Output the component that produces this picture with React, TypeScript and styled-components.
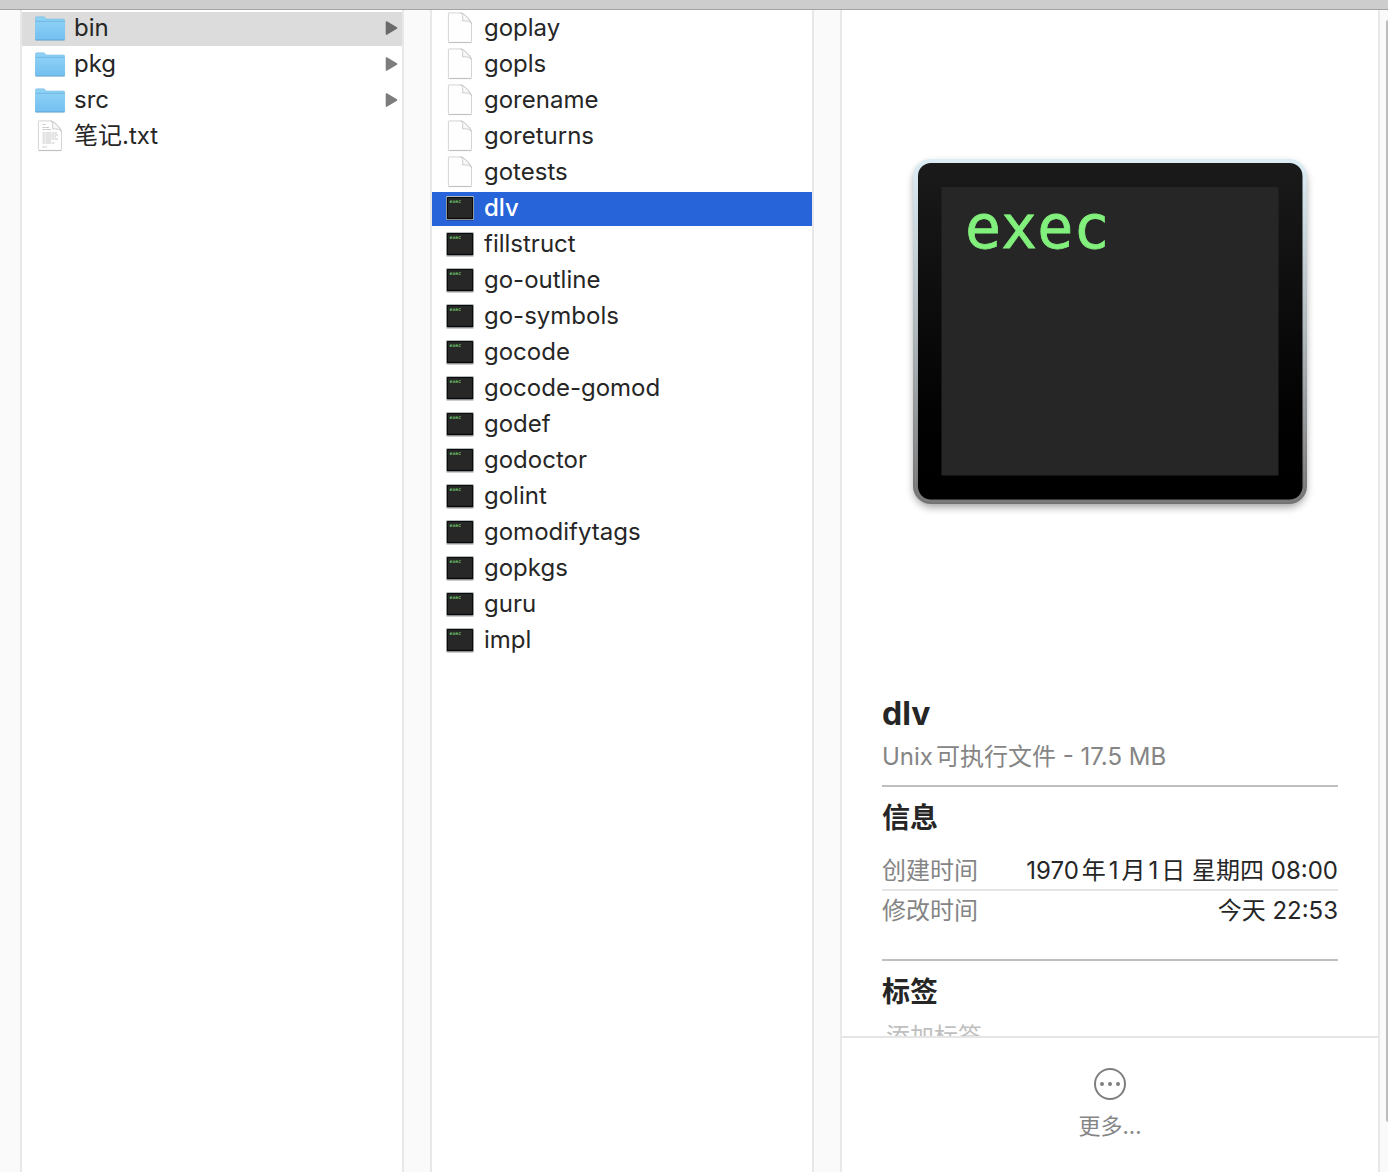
import React, { useState } from "react";
import styled, { createGlobalStyle } from "styled-components";

const GlobalStyle = createGlobalStyle`
  *, *::before, *::after { box-sizing: border-box; }
  body {
    margin: 0;
    background: #fff;
    color: #262626;
    font-family: Inter, "Noto Sans CJK SC", sans-serif;
    font-size: 24px;
    line-height: 32px;
    text-autospace: normal;
  }
  button, input { font: inherit; color: inherit; }
`;

const Window = styled.div`
  display: flex;
  flex-direction: column;
  height: 100vh;
  overflow: hidden;
`;

const Toolbar = styled.header`
  flex: none;
  height: 10px;
  background: #cdcdcd;
  border-bottom: 1px solid #a3a3a3;
`;

const Browser = styled.main`
  flex: 1;
  min-height: 0;
  display: flex;
`;

const Gutter = styled.div<{ $width: number }>`
  flex: none;
  width: ${(p) => p.$width}px;
  background: #fafafa;
`;

const Column = styled.nav`
  flex: none;
  width: 384px;
  padding-top: 2px;
  border: solid #e8e8e8;
  border-width: 0 2px;
`;

const List = styled.ul`
  display: flex;
  flex-direction: column;
  gap: 2px;
  margin: 0;
  padding: 0;
  list-style: none;
`;

const Row = styled.button<{ $tone: "plain" | "path" | "active" }>`
  display: flex;
  align-items: flex-start;
  gap: 8px;
  width: 100%;
  height: 34px;
  padding: 0 4px 0 12px;
  border: 0;
  text-align: left;
  background: ${(p) => ({ plain: "transparent", path: "#dcdcdc", active: "#2763d9" })[p.$tone]};
  color: ${(p) => (p.$tone === "active" ? "#fff" : "#262626")};
  font-weight: ${(p) => (p.$tone === "active" ? 500 : 400)};
`;

const Glyph = styled.svg`
  flex: none;
  display: block;
  width: 32px;
  height: 34px;
`;

const Name = styled.span`
  flex: 1;
  min-width: 0;
  white-space: nowrap;
  overflow: hidden;
  text-overflow: ellipsis;
`;

const Arrow = styled.svg`
  flex: none;
  width: 14px;
  height: 34px;
`;

const Preview = styled.section`
  flex: 1;
  min-width: 0;
  display: flex;
  flex-direction: column;
  border: solid #e8e8e8;
  border-width: 0 2px;
`;

const Details = styled.div`
  flex: 1;
  min-height: 0;
  overflow: hidden;
  padding: 0 40px;
`;

const Artwork = styled.div`
  display: flex;
  justify-content: center;
  padding: 140px 0 174px;
`;

const Art = styled.svg`
  flex: none;
  display: block;
  width: 420px;
  height: 370px;
`;

const Title = styled.h1`
  margin: 0;
  font-size: 32px;
  line-height: 40px;
  font-weight: 700;
`;

const Kind = styled.p`
  margin: 0;
  padding: 7px 0 12px;
  color: #858585;
`;

const Group = styled.section<{ $tail?: number }>`
  border-top: 2px solid #bfbfbf;
  padding: 11px 0 ${(p) => p.$tail ?? 0}px;
`;

const Heading = styled.h2`
  margin: 0;
  font-size: 28px;
  line-height: 40px;
  font-weight: 700;
`;

const Facts = styled.dl`
  margin: 11px 0 0;
`;

const Fact = styled.div`
  display: flex;
  justify-content: space-between;
  padding: 6px 0 2px;
  & + & {
    padding-top: 4px;
    border-top: 2px solid #e5e5e5;
  }
`;

const Term = styled.dt`
  color: #858585;
`;

const Value = styled.dd`
  margin: 0;
`;

const TagInput = styled.input`
  display: block;
  width: 100%;
  height: 40px;
  margin-top: 4px;
  padding: 0 4px;
  border: 0;
  outline: 0;
  background: transparent;
  &::placeholder { color: #bfbfbf; opacity: 1; }
`;

const Footer = styled.footer`
  flex: none;
  display: flex;
  justify-content: center;
  height: 136px;
  padding-top: 28px;
  border-top: 2px solid #e5e5e5;
`;

const MoreButton = styled.button`
  display: flex;
  flex-direction: column;
  align-items: center;
  align-self: flex-start;
  gap: 8px;
  padding: 0;
  border: 0;
  background: none;
  color: #858585;
  font-size: 22px;
`;

const MoreIcon = styled.svg`
  width: 36px;
  height: 36px;
`;

const ScrollTrack = styled.div`
  flex: none;
  width: 8px;
  display: flex;
  justify-content: flex-end;
  padding: 10px 0 50px;
  background: #fafafa;
`;

const ScrollThumb = styled.div`
  width: 2px;
  border-radius: 2px 0 0 2px;
  background: #bdbdbd;
`;

type Kinds = "folder" | "text" | "blank" | "exec";

function FolderIcon() {
  return (
    <Glyph viewBox="0 0 32 34" aria-hidden="true">
      <defs>
        <linearGradient id="folderFront" x1="0" y1="0" x2="0" y2="1">
          <stop offset="0" stopColor="#8dd0f6" />
          <stop offset="1" stopColor="#72bff0" />
        </linearGradient>
      </defs>
      <path d="M1.5 28V5.9Q1.5 4.8 2.7 4.8H9.4Q10.4 4.8 11 5.6L12 7H29.6Q30.6 7 30.6 8V28Z" fill="#8dd1f5" stroke="#6fb4dc" strokeWidth=".5" />
      <path d="M1.2 9.4H30.8V27.2Q30.8 28 30 28H2Q1.2 28 1.2 27.2Z" fill="url(#folderFront)" />
      <path d="M1.5 9.3H30.5" stroke="#67b1de" strokeWidth=".8" />
      <path d="M1.5 28H30.5" stroke="#5c9fca" strokeWidth=".8" />
    </Glyph>
  );
}

function PageIcon({ lines }: { lines?: boolean }) {
  return (
    <Glyph viewBox="0 0 32 34" aria-hidden="true">
      <path d="M5 .9H16.5C20 .9 27.5 8.5 27.5 12V29.8Q27.5 30.4 26.9 30.4H5Q4.4 30.4 4.4 29.8V1.5Q4.4 .9 5 .9Z" fill="#fefefe" stroke="#cfcfcf" strokeWidth=".9" />
      <path d="M4.6 30.6H27.3" stroke="#bcbcbc" strokeWidth=".9" />
      <path d="M16.8 .9C19 1.8 18.9 4.5 18.6 8.9C22.5 8.6 26.3 9 27.4 11.6C26.6 8.4 20 1.5 16.8 .9Z" fill="#f8f8f8" stroke="#c2c2c2" strokeWidth=".8" strokeLinejoin="round" />
      {lines && (
        <path
          d="M8.5 4.5H12M8.5 7.5H15M8.5 9.5H17M8.5 13H23M8.5 15H24M8.5 17H22M8.5 19H24M8.5 21H17M8.5 23H21M8.5 27H13"
          stroke="#c3c3c3"
          strokeWidth=".9"
          strokeDasharray="3 .5 5 .5"
        />
      )}
    </Glyph>
  );
}

function ExecIcon() {
  return (
    <Glyph viewBox="0 0 32 34" aria-hidden="true">
      <rect x="2" y="5" width="28" height="24" rx="1.4" fill="#000" opacity=".2" />
      <rect x="2" y="4" width="28" height="24" rx="1.2" fill="#b4bcc0" />
      <rect x="2.8" y="5" width="26.4" height="22.2" rx=".8" fill="#0a0a0a" />
      <rect x="4" y="6" width="24" height="19.8" fill="#272727" />
      <text x="5.5" y="11" fontFamily='"DejaVu Sans Mono", monospace' fontWeight="700" fontSize="4.8" fill="#6fc568">exec</text>
    </Glyph>
  );
}

function FileIcon({ kind }: { kind: Kinds }) {
  if (kind === "folder") return <FolderIcon />;
  if (kind === "exec") return <ExecIcon />;
  return <PageIcon lines={kind === "text"} />;
}

function ExecArtwork() {
  return (
    <Art viewBox="0 0 420 370" role="img" aria-label="exec">
      <defs>
        <linearGradient id="rim" x1="0" y1="0" x2="0" y2="1">
          <stop offset="0" stopColor="#dcedf5" />
          <stop offset=".5" stopColor="#aeb6ba" />
          <stop offset="1" stopColor="#747272" />
        </linearGradient>
        <linearGradient id="bezel" x1="0" y1="0" x2="0" y2="1">
          <stop offset="0" stopColor="#1a1a1a" />
          <stop offset=".75" stopColor="#020202" />
          <stop offset="1" stopColor="#000" />
        </linearGradient>
        <filter id="drop" x="-10%" y="-10%" width="120%" height="120%">
          <feGaussianBlur stdDeviation="4" />
        </filter>
      </defs>
      <rect x="14" y="14" width="392" height="343" rx="18" fill="#000" opacity=".38" filter="url(#drop)" />
      <rect x="13" y="9" width="394" height="345" rx="18" fill="url(#rim)" />
      <rect x="15.5" y="10.5" width="389" height="341" rx="16" fill="none" stroke="#fff" strokeOpacity=".08" />
      <rect x="18" y="13" width="384.5" height="336.5" rx="13" fill="url(#bezel)" />
      <rect x="41.5" y="37" width="337" height="288.5" fill="#262626" />
      <text x="65" y="98" fontFamily='"DejaVu Sans Mono", monospace' fontSize="60" fill="#82f07c" stroke="#82f07c" strokeWidth=".8">exec</text>
    </Art>
  );
}

interface Entry {
  name: string;
  kind: Kinds;
}

const rootEntries: Entry[] = [
  { name: "bin", kind: "folder" },
  { name: "pkg", kind: "folder" },
  { name: "src", kind: "folder" },
  { name: "笔记.txt", kind: "text" },
];

const binEntries: Entry[] = [
  ...["goplay", "gopls", "gorename", "goreturns", "gotests"].map((name): Entry => ({ name, kind: "blank" })),
  ...[
    "dlv", "fillstruct", "go-outline", "go-symbols", "gocode", "gocode-gomod", "godef",
    "godoctor", "golint", "gomodifytags", "gopkgs", "guru", "impl",
  ].map((name): Entry => ({ name, kind: "exec" })),
];

interface FileColumnProps {
  label: string;
  entries: Entry[];
  selected: string;
  tone: "path" | "active";
  onSelect: (name: string) => void;
}

function FileColumn({ label, entries, selected, tone, onSelect }: FileColumnProps) {
  return (
    <Column aria-label={label}>
      <List>
        {entries.map((entry) => {
          const on = entry.name === selected;
          const arrowColor = on ? "#6a6a6a" : "#7d7d7d";
          return (
            <li key={entry.name}>
              <Row type="button" $tone={on ? tone : "plain"} aria-pressed={on} onClick={() => onSelect(entry.name)}>
                <FileIcon kind={entry.kind} />
                <Name>{entry.name}</Name>
                {entry.kind === "folder" && (
                  <Arrow viewBox="0 0 14 34" aria-hidden="true">
                    <path d="M2.5 10L12.5 16L2.5 22Z" fill={arrowColor} stroke={arrowColor} strokeLinejoin="round" strokeWidth="1.6" />
                  </Arrow>
                )}
              </Row>
            </li>
          );
        })}
      </List>
    </Column>
  );
}

export default function App() {
  const [folder, setFolder] = useState("bin");
  const [file, setFile] = useState("dlv");
  return (
    <>
      <GlobalStyle />
      <Window>
        <Toolbar />
        <Browser>
          <Gutter $width={20} />
          <FileColumn label="go" entries={rootEntries} selected={folder} tone="path" onSelect={setFolder} />
          <Gutter $width={26} />
          <FileColumn label="bin" entries={binEntries} selected={file} tone="active" onSelect={setFile} />
          <Gutter $width={26} />
          <Preview>
            <Details>
              <Artwork>
                <ExecArtwork />
              </Artwork>
              <Title>{file}</Title>
              <Kind>Unix可执行文件 - 17.5 MB</Kind>
              <Group $tail={30}>
                <Heading>信息</Heading>
                <Facts>
                  <Fact>
                    <Term>创建时间</Term>
                    <Value>1970年1月1日 星期四 08:00</Value>
                  </Fact>
                  <Fact>
                    <Term>修改时间</Term>
                    <Value>今天 22:53</Value>
                  </Fact>
                </Facts>
              </Group>
              <Group>
                <Heading>标签</Heading>
                <TagInput type="text" aria-label="标签" placeholder="添加标签" />
              </Group>
            </Details>
            <Footer>
              <MoreButton type="button">
                <MoreIcon viewBox="0 0 36 36" aria-hidden="true">
                  <circle cx="18" cy="18" r="15" fill="none" stroke="#7f7f7f" strokeWidth="2" />
                  <circle cx="10" cy="18" r="2" fill="#7f7f7f" />
                  <circle cx="18" cy="18" r="2" fill="#7f7f7f" />
                  <circle cx="26" cy="18" r="2" fill="#7f7f7f" />
                </MoreIcon>
                更多...
              </MoreButton>
            </Footer>
          </Preview>
          <ScrollTrack>
            <ScrollThumb />
          </ScrollTrack>
        </Browser>
      </Window>
    </>
  );
}
